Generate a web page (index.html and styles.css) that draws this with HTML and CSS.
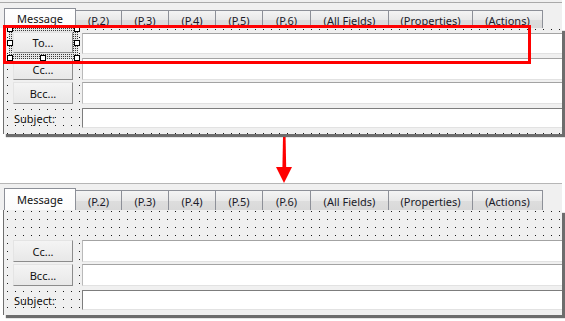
FILE: index.html
```html
<!DOCTYPE html>
<html>
<head>
<meta charset="utf-8">
<link rel="stylesheet" href="styles.css">
</head>
<body>
<div class="panel panel-top">
  <div class="strip"></div>
  <div class="tabs">
    <div class="tab tab-sel w-msg">Message</div>
    <div class="tab w-p2">(P.2)</div>
    <div class="tab w-p">(P.3)</div>
    <div class="tab w-p">(P.4)</div>
    <div class="tab w-p">(P.5)</div>
    <div class="tab w-p6">(P.6)</div>
    <div class="tab w-all">(All Fields)</div>
    <div class="tab w-prop">(Properties)</div>
    <div class="tab w-act">(Actions)</div>
  </div>
  <div class="body">
    <div class="row row-to">
      <div class="btn btn-sel">To...</div>
      <div class="field field-to"></div>
    </div>
    <div class="row row-cc">
      <div class="btn">Cc...</div>
      <div class="field"></div>
    </div>
    <div class="row row-bcc">
      <div class="btn">Bcc...</div>
      <div class="field"></div>
    </div>
    <div class="row row-subj">
      <div class="label">Subject:</div>
      <div class="field field-subj"></div>
    </div>
  </div>
  <div class="hatch"></div>
  <div class="handle h-tl"></div>
  <div class="handle h-tr"></div>
  <div class="handle h-ml"></div>
  <div class="handle h-mr"></div>
  <div class="handle h-bl"></div>
  <div class="handle h-bm"></div>
  <div class="handle h-br"></div>
  <div class="redbox"></div>
</div>

<div class="arrow">
  <svg width="18" height="49" viewBox="0 0 18 49">
    <polygon points="8,3 10.6,3 11.2,34 7.4,34" fill="#ff0000"/>
    <polygon points="1,33 17,33 9,49" fill="#ff0000"/>
  </svg>
</div>

<div class="panel panel-bottom">
  <div class="strip"></div>
  <div class="tabs">
    <div class="tab tab-sel w-msg">Message</div>
    <div class="tab w-p2">(P.2)</div>
    <div class="tab w-p">(P.3)</div>
    <div class="tab w-p">(P.4)</div>
    <div class="tab w-p">(P.5)</div>
    <div class="tab w-p6">(P.6)</div>
    <div class="tab w-all">(All Fields)</div>
    <div class="tab w-prop">(Properties)</div>
    <div class="tab w-act">(Actions)</div>
  </div>
  <div class="body">
    <div class="row row-to row-empty"></div>
    <div class="row row-cc">
      <div class="btn">Cc...</div>
      <div class="field"></div>
    </div>
    <div class="row row-bcc">
      <div class="btn">Bcc...</div>
      <div class="field"></div>
    </div>
    <div class="row row-subj">
      <div class="label">Subject:</div>
      <div class="field field-subj"></div>
    </div>
  </div>
</div>
</body>
</html>
```

FILE: styles.css
```css
html, body {
  margin: 0;
  padding: 0;
}
body {
  width: 565px;
  height: 321px;
  overflow: hidden;
  background: #ffffff;
  font-family: "Noto Sans", "Open Sans", sans-serif;
  font-size: 11px;
  color: #111111;
}

.panel {
  position: relative;
  width: 565px;
}

/* top chrome strip */
.panel-top .strip {
  height: 8px;
  width: 562px;
  background: linear-gradient(#f0f0f0 0 2px, #a9a9a9 2px 3px, #f0f0f0 3px);
}
.panel-bottom .strip {
  height: 4px;
  width: 562px;
  background: #f0f0f0;
  border-top: 1px solid #b6b6b6;
}

/* tab row */
.tabs {
  display: flex;
  align-items: flex-end;
  width: 558px;
  padding-left: 4px;
  background: #f0f0f0;
}
.panel-top .tabs { height: 20px; }
.panel-bottom .tabs { height: 22px; }

.tab {
  box-sizing: border-box;
  display: flex;
  align-items: center;
  justify-content: center;
  border: 1px solid #8d9098;
  border-bottom: none;
  background: linear-gradient(#f4f4f4, #e9e9e9 50%, #dddddd 51%, #d9d9d9);
  color: #1b1b2a;
  margin-right: -1px;
  padding-top: 1px;
}
.panel-top .tab { height: 18px; }
.panel-bottom .tab { height: 20px; }

.tab-sel {
  background: linear-gradient(#ffffff, #fbfbfb);
  color: #111111;
  position: relative;
  z-index: 1;
  padding-top: 0;
}
.panel-top .tab-sel { height: 20px; }
.panel-bottom .tab-sel { height: 22px; }

.w-msg { width: 72px; }
.w-p2 { width: 47px; }
.w-p { width: 48px; }
.w-p6 { width: 49px; }
.w-all { width: 79px; }
.w-prop { width: 85px; }
.w-act { width: 71px; }

/* designer body with dotted grid */
.body {
  box-sizing: border-box;
  margin-left: 3px;
  width: 559px;
  border-left: 1px solid #6f6f6f;
  padding-top: 4px;
  background:
    conic-gradient(at 1px 1px, transparent 75%, #1a1a1a 0) 3px 1px / 8px 8px,
    #f0f0f0;
  box-shadow: 3px 3px 1px rgba(60, 60, 60, 0.75);
}
.panel-top .body { height: 106px; }
.panel-bottom .body { height: 105px; }

.row {
  display: flex;
  height: 22px;
}
.row-cc { margin-top: 4px; }
.row-bcc { margin-top: 2px; }
.row-subj { margin-top: 4px; height: 20px; }

.btn {
  box-sizing: border-box;
  width: 60px;
  margin-left: 9px;
  display: flex;
  align-items: center;
  justify-content: center;
  border: 1px solid;
  border-color: #e4e4e4 #8c8c8c #8c8c8c #e4e4e4;
  background: linear-gradient(#f4f4f4, #e8e8e8);
  color: #111111;
}
.btn-sel {
  height: 21px;
  position: relative;
  z-index: 2;
}

.field {
  box-sizing: border-box;
  flex: 1;
  margin-left: 9px;
  background: #ffffff;
  border-top: 1px solid #a3a3a3;
  border-left: 1px solid #b9b9b9;
  border-bottom: 1px solid #e2e2e2;
}
.field-to {
  margin-top: 1px;
  height: 21px;
}
.field-subj {
  margin-left: 0;
  border-top-color: #7d7d7d;
  border-left-color: #7d7d7d;
}

.label {
  flex: 0 0 68px;
  margin-left: 10px;
  display: flex;
  align-items: center;
  color: #111111;
}

/* selection overlay around the To... button */
.hatch {
  position: absolute;
  left: 9px;
  top: 28px;
  width: 69px;
  height: 31px;
  background:
    conic-gradient(at 1px 1px, transparent 75%, #3a3a3a 0) 0 0 / 2px 2px,
    #e6e6e6;
  z-index: 1;
}
.handle {
  position: absolute;
  box-sizing: border-box;
  width: 6px;
  height: 6px;
  background: #ffffff;
  border: 1px solid #000000;
  z-index: 3;
}
.h-tl { left: 7px; top: 26px; }
.h-tr { left: 74px; top: 26px; }
.h-ml { left: 7px; top: 40px; }
.h-mr { left: 74px; top: 40px; }
.h-bl { left: 7px; top: 55px; }
.h-bm { left: 40px; top: 55px; }
.h-br { left: 74px; top: 55px; }

.redbox {
  position: absolute;
  box-sizing: border-box;
  left: 3px;
  top: 25px;
  width: 528px;
  height: 39px;
  border: 3px solid #ff0000;
  z-index: 4;
}

/* arrow between the two panels */
.arrow {
  height: 49px;
}
.arrow svg {
  display: block;
  margin-left: 275px;
  overflow: visible;
}
```
